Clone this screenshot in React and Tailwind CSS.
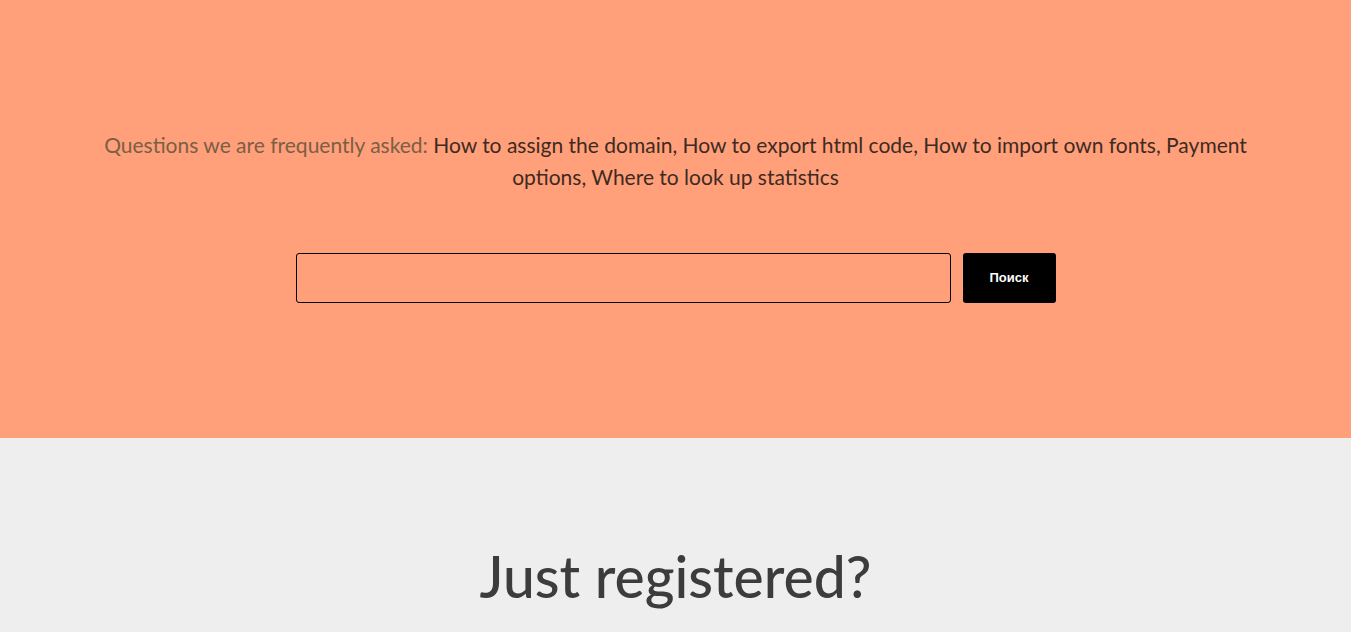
export default function App() {
  return (
    <div className="min-h-screen bg-[#eeeeee] font-['Lato',sans-serif]">
      <section className="bg-[#ffa07a] pt-[129px] pb-[135px]">
        <p className="mx-auto max-w-[1184px] px-4 text-center text-[21px] leading-[32px] text-[#3e2a22]">
          <span className="text-[#7b5e45]">Questions we are frequently asked: </span>
          How to assign the domain, How to export html code, How to import own fonts, Payment options, Where to look up statistics
        </p>
        <form className="mt-[60px] flex justify-center gap-3" onSubmit={(e) => e.preventDefault()}>
          <input
            type="text"
            className="h-[50px] w-[655px] rounded-[3px] border border-black bg-transparent px-3 text-base outline-none"
          />
          <button
            type="submit"
            className="h-[50px] w-[93px] rounded-[3px] bg-black font-['Liberation_Sans',sans-serif] text-[13px] font-bold text-white"
          >
            Поиск
          </button>
        </form>
      </section>
      <section className="pt-[98px] text-center">
        <h2 className="text-[57px] font-medium leading-[80px] text-[#3c3c3c]">Just registered?</h2>
      </section>
    </div>
  );
}
